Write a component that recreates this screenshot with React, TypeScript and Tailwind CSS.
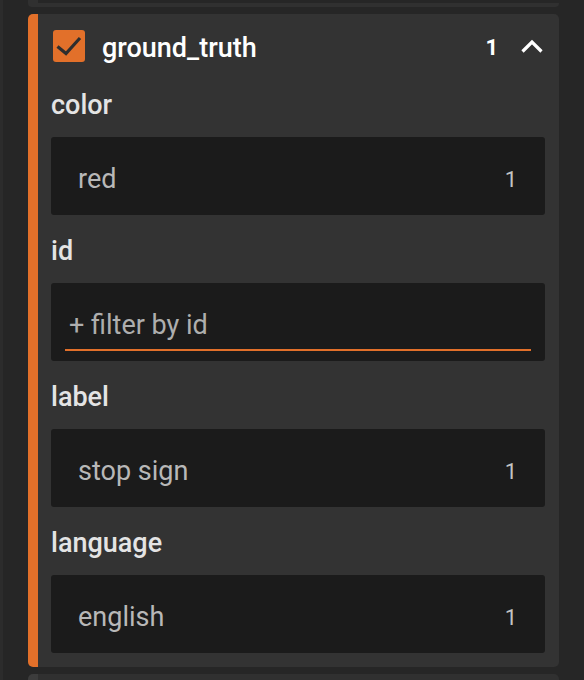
import { useState } from "react";

interface Field {
  name: string;
  value?: string;
  count?: number;
}

const fields: Field[] = [
  { name: "color", value: "red", count: 1 },
  { name: "id" },
  { name: "label", value: "stop sign", count: 1 },
  { name: "language", value: "english", count: 1 },
];

function Chevron() {
  return (
    <svg width="22" height="15" viewBox="0 0 22 15" fill="none">
      <polyline points="1.5,12.5 11,3 20.5,12.5" stroke="#ffffff" strokeWidth="3.2" strokeLinejoin="miter" />
    </svg>
  );
}

function FieldBox({ field }: { field: Field }) {
  const [query, setQuery] = useState("");

  if (field.value === undefined) {
    return (
      <div className="flex flex-col h-[78px] rounded-[3px] bg-[#1b1b1b] pt-[11px] px-[14px]">
        <input
          className="h-[57px] w-full bg-transparent outline-none border-b-2 border-[#e2702a] pl-[4px] pt-[6px] text-[27px] text-[#d0d0d0] placeholder:text-[#aeaeae]"
          placeholder={`+ filter by ${field.name}`}
          value={query}
          onChange={(e) => setQuery(e.target.value)}
        />
      </div>
    );
  }

  return (
    <div className="flex items-center justify-between h-[78px] rounded-[3px] bg-[#1b1b1b] pl-[27px] pr-[28px]">
      <span className="text-[27px] text-[#b8b8b8] pt-[6px]">{field.value}</span>
      <span className="text-[22px] text-[#c4c4c4] pt-[6px]">{field.count}</span>
    </div>
  );
}

export default function App() {
  const [checked, setChecked] = useState(true);

  return (
    <div
      className="flex w-[584px] h-[680px] overflow-hidden bg-[#262626] border-l-[3px] border-[#2c2c2c]"
      style={{ fontFamily: "Roboto, 'Noto Sans', sans-serif" }}
    >
      <div className="ml-[25px] w-[531px] flex flex-col">
        {/* end of the panel above */}
        <div className="shrink-0 h-[7px] rounded-b-[4px] bg-[#303030]">
          <div className="h-[3px] ml-[10px] bg-[#262626]" />
        </div>

        <div className="shrink-0 mt-[7px] flex flex-col rounded-[5px] border-l-[10px] border-[#e2702a] bg-[#333333] pl-[13px] pr-[14px] pt-[16px] pb-[14px]">
          <div className="flex items-center h-[32px] mb-[7px]">
            <button
              type="button"
              onClick={() => setChecked(!checked)}
              className="ml-[2px] w-[32px] h-[32px] rounded-[3px] bg-[#e2702a] flex items-center justify-center"
            >
              {checked && (
                <svg width="32" height="32" viewBox="0 0 32 32" fill="none">
                  <polyline points="4.5,16.5 13,23.5 27,8" stroke="#2e2e2e" strokeWidth="3.2" />
                </svg>
              )}
            </button>
            <span className="ml-[17px] pt-[5px] text-[27px] font-medium text-white leading-none">ground_truth</span>
            <span className="ml-auto pt-[3px] text-[22px] font-bold text-white">1</span>
            <span className="ml-[23px] mr-[2px] flex items-center">
              <Chevron />
            </span>
          </div>

          {fields.map((f) => (
            <div key={f.name} className="flex flex-col">
              <div className="h-[68px] flex items-center pt-[5px]">
                <span className="text-[27px] font-medium text-[#e4e4e4]">{f.name}</span>
              </div>
              <FieldBox field={f} />
            </div>
          ))}
        </div>

        {/* start of the panel below */}
        <div className="shrink-0 mt-[7px] h-[20px] rounded-t-[5px] border-l-[10px] border-[#3c3c3c] bg-[#303030]" />
      </div>
    </div>
  );
}
